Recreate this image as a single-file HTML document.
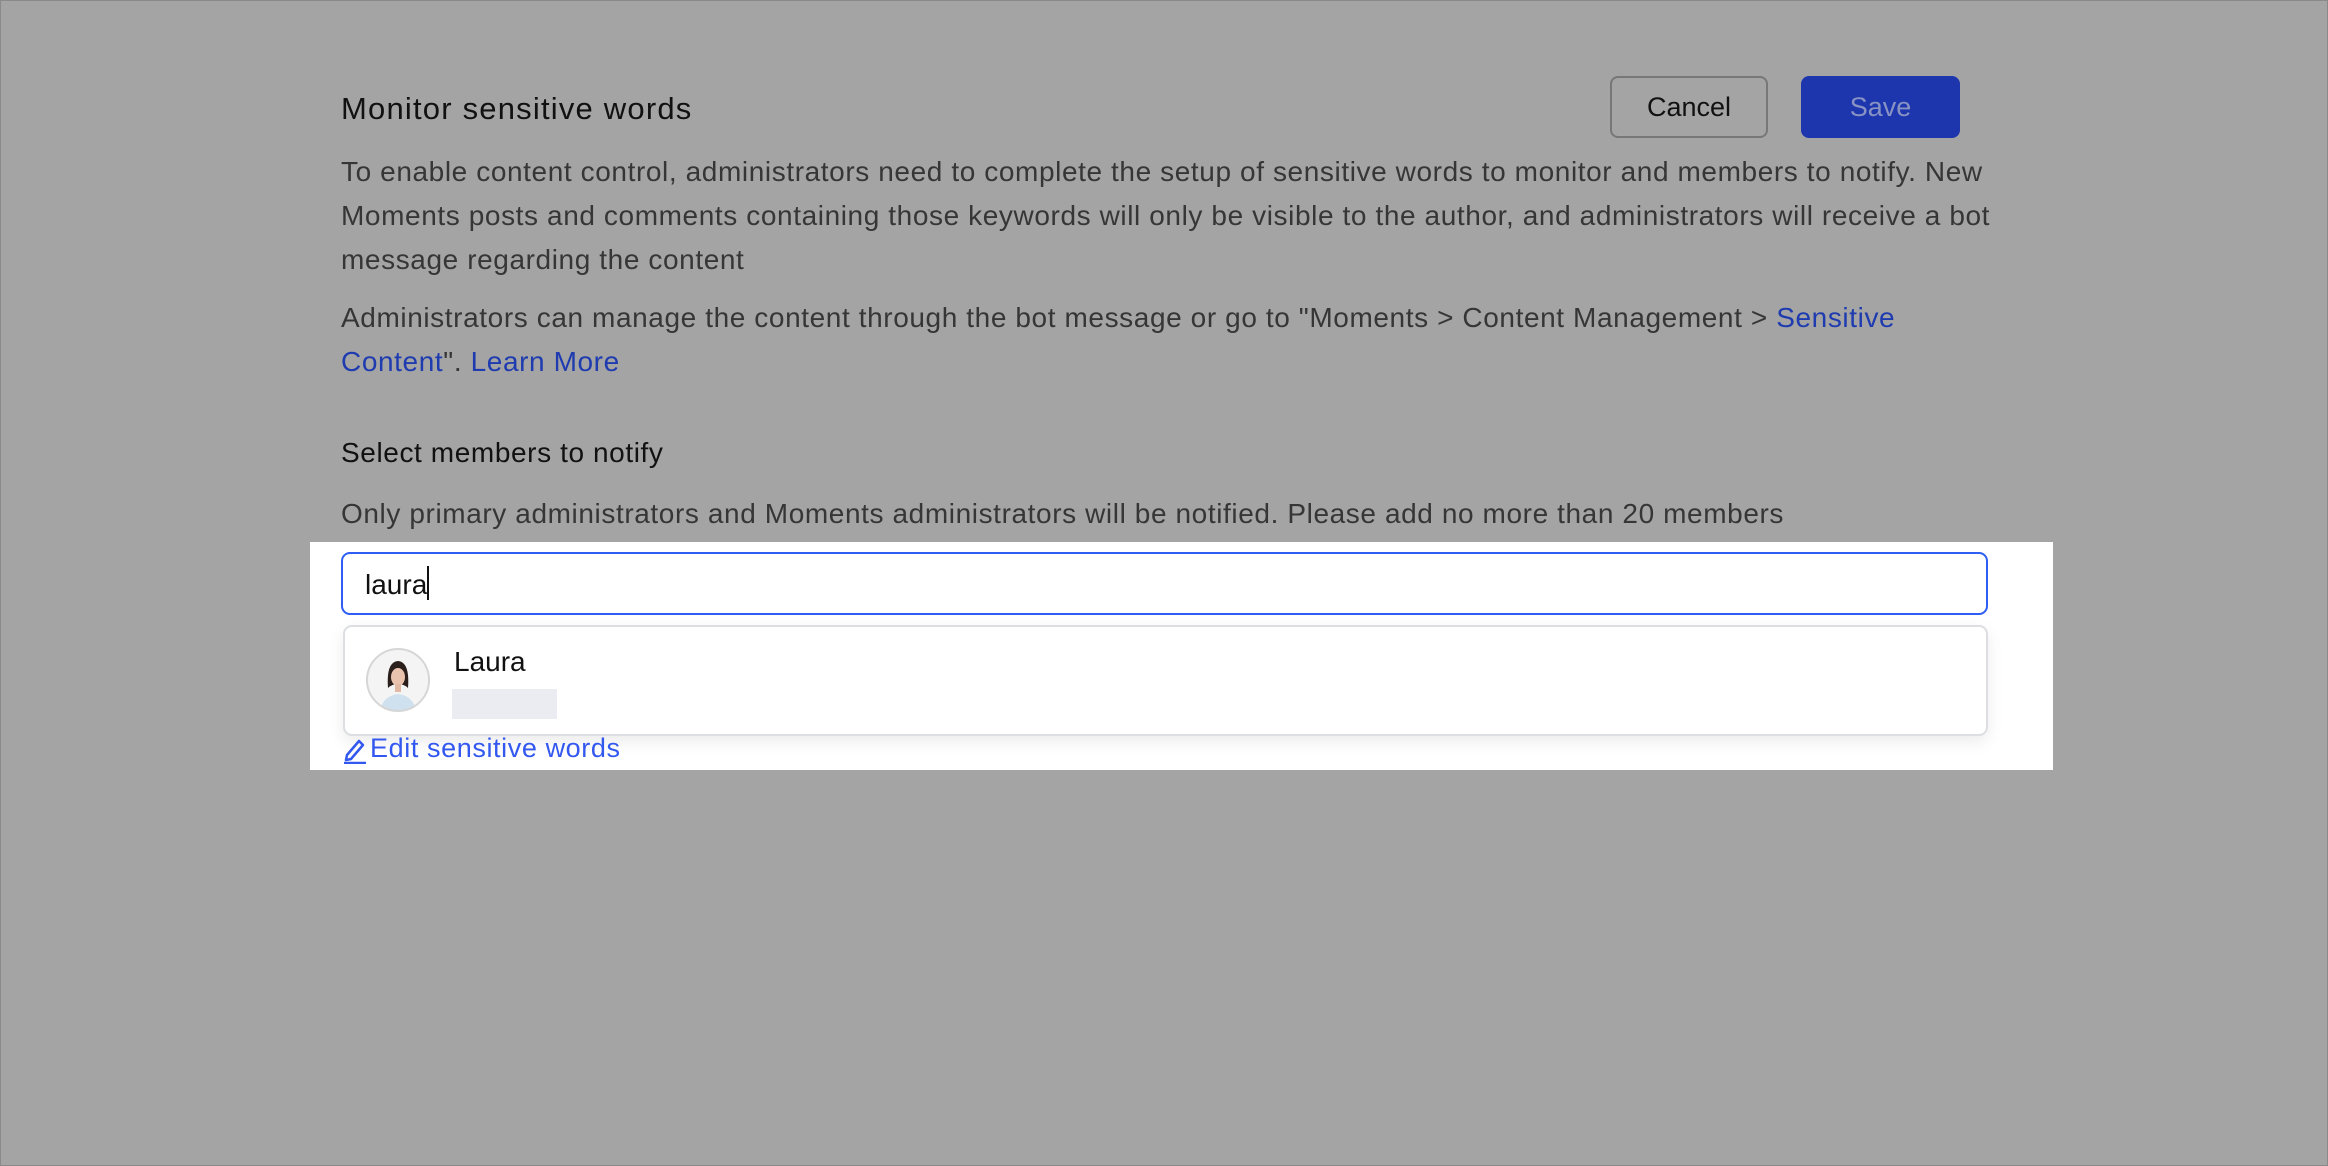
<!DOCTYPE html>
<html><head><meta charset="utf-8"><style>
html,body{margin:0;padding:0;}
body{width:2328px;height:1166px;background:#a4a4a4;position:relative;overflow:hidden;font-family:"Liberation Sans",sans-serif;}
.frame{position:absolute;left:0;top:0;width:2326px;height:1164px;border:1px solid #8a8a8a;}
.t{position:absolute;white-space:nowrap;}
.title{left:341px;top:91px;font-size:31px;color:#111;letter-spacing:1.2px;}
.p{left:341px;font-size:28px;color:#363636;line-height:44px;letter-spacing:0.6px;}
.btn{position:absolute;top:76px;height:62px;border-radius:8px;box-sizing:border-box;font-size:27px;display:flex;align-items:center;justify-content:center;}
.cancel{left:1610px;width:158px;border:2px solid #777;color:#111;}
.save{left:1801px;width:159px;background:#1d35ad;color:#8893c4;}
.link{color:#1e3bb0;}
.panel{position:absolute;left:310px;top:542px;width:1743px;height:228px;background:#fff;}
.input{position:absolute;left:341px;top:552px;width:1647px;height:63px;border:2px solid #2e5ef3;border-radius:9px;box-sizing:border-box;}
.dd{position:absolute;left:343px;top:625px;width:1645px;height:111px;border:2px solid #dcdee2;border-radius:9px;box-sizing:border-box;background:#fff;box-shadow:0 6px 16px rgba(0,0,0,0.08);}
</style></head><body>
<div class="frame"></div>
<div class="t title">Monitor sensitive words</div>
<div class="btn cancel">Cancel</div>
<div class="btn save">Save</div>
<div class="t p" style="top:150px">To enable content control, administrators need to complete the setup of sensitive words to monitor and members to notify. New</div>
<div class="t p" style="top:194px">Moments posts and comments containing those keywords will only be visible to the author, and administrators will receive a bot</div>
<div class="t p" style="top:238px">message regarding the content</div>
<div class="t p" style="top:296px">Administrators can manage the content through the bot message or go to "Moments &gt; Content Management &gt; <span class="link">Sensitive</span></div>
<div class="t p" style="top:340px"><span class="link">Content</span>". <span class="link">Learn More</span></div>
<div class="t p" style="top:431px;color:#111">Select members to notify</div>
<div class="t p" style="top:492px">Only primary administrators and Moments administrators will be notified. Please add no more than 20 members</div>
<div class="panel"></div>
<div class="input"></div>
<div class="t" style="left:365px;top:566px;font-size:28px;color:#111;">laura<span style="display:inline-block;width:2px;height:34px;background:#111;vertical-align:-6px;"></span></div>
<div class="dd"></div>
<svg style="position:absolute;left:366px;top:648px" width="64" height="64" viewBox="0 0 64 64">
<defs><clipPath id="c"><circle cx="32" cy="32" r="31"/></clipPath></defs>
<circle cx="32" cy="32" r="31" fill="#f4f4f4"/>
<g clip-path="url(#c)">
<path d="M14 64 Q16 48 32 46 Q48 48 50 64Z" fill="#cfe0ef"/>
<path d="M22 40 Q20 14 32 13 Q44 14 42 40 Q38 36 32 36 Q26 36 22 40Z" fill="#2b1f1c"/>
<ellipse cx="32" cy="29" rx="7" ry="9" fill="#e9c3ad"/>
<rect x="29" y="36" width="6" height="8" fill="#e2b9a2"/>
</g>
<circle cx="32" cy="32" r="31" fill="none" stroke="#d6d6d6" stroke-width="2"/>
</svg>
<div class="t" style="left:454px;top:646px;font-size:28px;color:#111;">Laura</div>
<div style="position:absolute;left:452px;top:689px;width:105px;height:30px;background:#eaecf2;"></div>
<svg style="position:absolute;left:342px;top:736px" width="26" height="28" viewBox="0 0 26 28">
<path d="M5 19 L17 5 L21 9 L9 23 L4 24 Z" fill="none" stroke="#3358f0" stroke-width="2.5" stroke-linejoin="round"/>
<line x1="2" y1="27" x2="24" y2="27" stroke="#3358f0" stroke-width="2.5"/>
</svg>
<div class="t" style="left:370px;top:733px;font-size:27px;color:#3358f0;letter-spacing:0.6px;">Edit sensitive words</div>
</body></html>
